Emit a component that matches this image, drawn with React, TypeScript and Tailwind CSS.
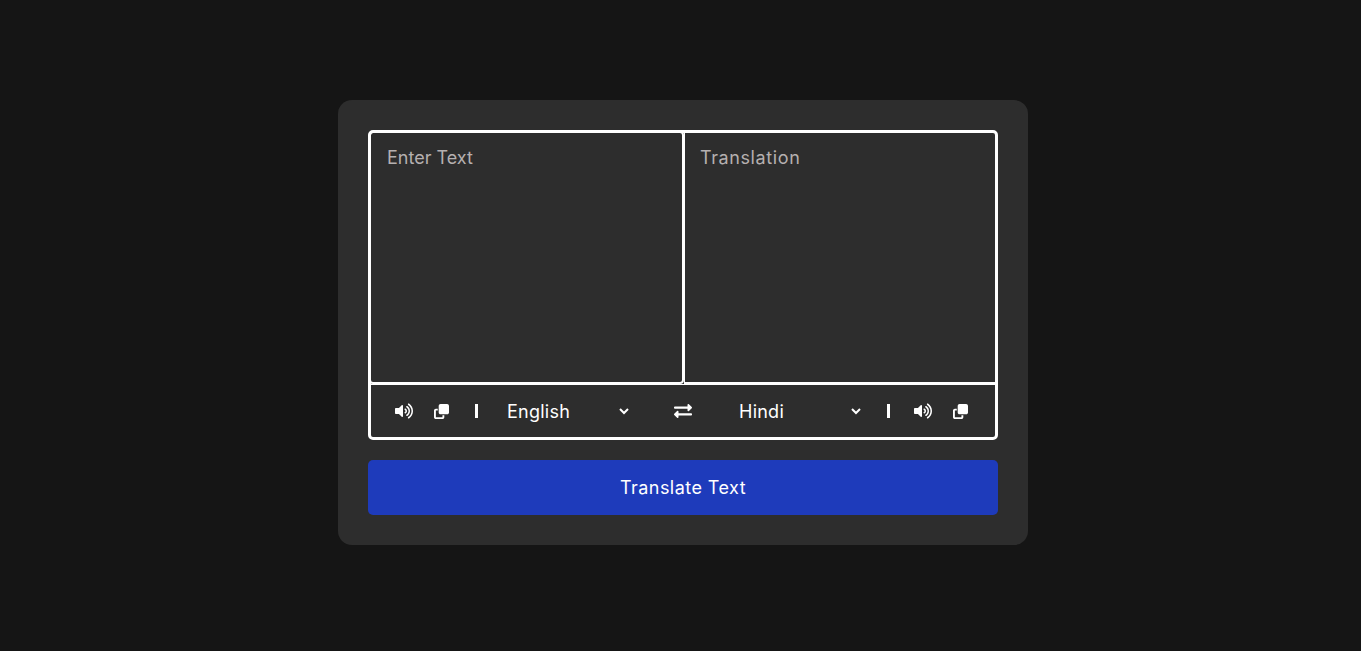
import { FaVolumeUp, FaExchangeAlt } from "react-icons/fa";
import { FaClone } from "react-icons/fa6";

function Tools() {
  return (
    <div className="flex items-center gap-[21px]">
      <FaVolumeUp className="w-[18px] h-[16px] text-white" />
      <FaClone className="w-[15px] h-[15px] text-white" />
    </div>
  );
}

function Lang({ value }: { value: string }) {
  return (
    <select
      defaultValue={value}
      className="w-[143px] h-[30px] bg-transparent text-white text-[18px] tracking-[0.25px] pl-[14px] outline-none appearance-auto"
    >
      <option className="bg-[#2d2d2d]">{value}</option>
    </select>
  );
}

export default function App() {
  return (
    <div
      className="h-[651px] bg-[#151515] flex items-center justify-center pb-[6px] pl-[5px]"
      style={{ fontFamily: 'Inter, "Open Sans", sans-serif' }}
    >
      <div className="w-[690px] h-[445px] bg-[#2d2d2d] rounded-[14px] p-[30px] flex flex-col">
        <div className="h-[310px] border-[3px] border-white rounded-[5px] flex flex-col">
          <div className="flex h-[253px] -mx-[2px] -mt-[2px]">
            <textarea
              placeholder="Enter Text"
              className="w-[315px] h-full resize-none bg-transparent border-2 border-white rounded-[4px] pl-[16px] pr-[15px] pt-[13px] text-[18px] leading-[24px] text-white placeholder:text-[#b5b0b0] outline-none"
            />
            <textarea
              placeholder="Translation"
              className="flex-1 h-full resize-none bg-transparent border-l border-b-2 border-white pl-[15px] pr-[15px] pt-[15px] text-[18px] leading-[24px] tracking-[0.6px] text-white placeholder:text-[#b5b0b0] outline-none"
            />
          </div>
          <div className="flex-1 flex items-center border-t border-white pl-[24px]">
            <Tools />
            <div className="w-[3px] h-[14px] bg-white ml-[26px] mr-[11px]" />
            <Lang value="English" />
            <FaExchangeAlt className="w-[18px] h-[18px] text-white ml-[42px] mr-[29px]" />
            <Lang value="Hindi" />
            <div className="w-[3px] h-[14px] bg-white ml-[23px] mr-[24px]" />
            <Tools />
          </div>
        </div>
        <button className="mt-[20px] h-[55px] bg-[#1e3bbb] rounded-[5px] flex items-center justify-center text-white text-[18px] tracking-[0.45px]">
          Translate Text
        </button>
      </div>
    </div>
  );
}
